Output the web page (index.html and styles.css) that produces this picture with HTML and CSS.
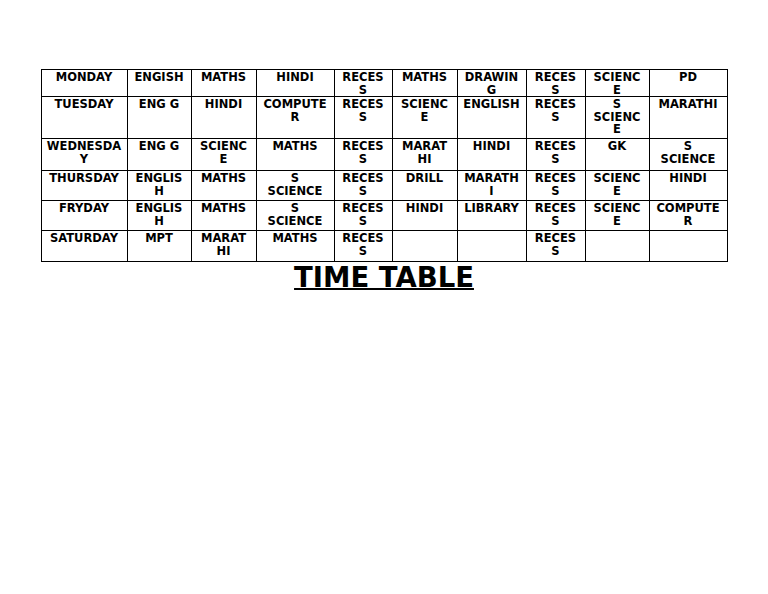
FILE: index.html
```html
<!DOCTYPE html>
<html>
<head>
<meta charset="utf-8">
<link rel="stylesheet" href="styles.css">
</head>
<body>
<div class="page">
<table class="tt">
<colgroup>
<col class="c1"><col class="c2"><col class="c3"><col class="c4"><col class="c5"><col class="c6"><col class="c7"><col class="c8"><col class="c9"><col class="c10">
</colgroup>
<tr class="r1"><td>MONDAY</td><td>ENGISH</td><td>MATHS</td><td>HINDI</td><td>RECESS</td><td>MATHS</td><td>DRAWING</td><td>RECESS</td><td>SCIENCE</td><td>PD</td></tr>
<tr class="r2"><td>TUESDAY</td><td>ENG G</td><td>HINDI</td><td>COMPUTER</td><td>RECESS</td><td>SCIENCE</td><td>ENGLISH</td><td>RECESS</td><td>S SCIENCE</td><td>MARATHI</td></tr>
<tr class="r3"><td>WEDNESDAY</td><td>ENG G</td><td>SCIENCE</td><td>MATHS</td><td>RECESS</td><td>MARATHI</td><td>HINDI</td><td>RECESS</td><td>GK</td><td>S SCIENCE</td></tr>
<tr class="r4"><td>THURSDAY</td><td>ENGLISH</td><td>MATHS</td><td>S SCIENCE</td><td>RECESS</td><td>DRILL</td><td>MARATHI</td><td>RECESS</td><td>SCIENCE</td><td>HINDI</td></tr>
<tr class="r5"><td>FRYDAY</td><td>ENGLISH</td><td>MATHS</td><td>S SCIENCE</td><td>RECESS</td><td>HINDI</td><td>LIBRARY</td><td>RECESS</td><td>SCIENCE</td><td>COMPUTER</td></tr>
<tr class="r6"><td>SATURDAY</td><td>MPT</td><td>MARATHI</td><td>MATHS</td><td>RECESS</td><td></td><td></td><td>RECESS</td><td></td><td></td></tr>
</table>
<h1 class="title">TIME TABLE</h1>
</div>
</body>
</html>
```
FILE: styles.css
```css
html, body {
  margin: 0;
  padding: 0;
  background: #ffffff;
}
.page {
  padding-top: 69px;
  display: flex;
  flex-direction: column;
  align-items: center;
  font-family: "DejaVu Sans", sans-serif;
  color: #000;
}
.tt {
  border-collapse: collapse;
  table-layout: fixed;
  width: 687px;
}
.tt td {
  border: 1px solid #000;
  padding: 1px 5px 0 5px;
  vertical-align: top;
  text-align: center;
  font-weight: bold;
  font-size: 11.5px;
  line-height: 12.5px;
  overflow-wrap: anywhere;
}
.c1 { width: 86px; }
.c2 { width: 64px; }
.c3 { width: 65px; }
.c4 { width: 78px; }
.c5 { width: 58px; }
.c6 { width: 65px; }
.c7 { width: 69px; }
.c8 { width: 59px; }
.c9 { width: 64px; }
.c10 { width: 78px; }
.r1 td { height: 20px; }
.r2 td { height: 40px; }
.r3 td { height: 30px; }
.r4 td { height: 28px; }
.r5 td { height: 28px; }
.r6 td { height: 29px; }
.title {
  margin: 0;
  font-size: 27.5px;
  line-height: 30px;
  font-weight: bold;
  text-decoration: underline;
  text-decoration-thickness: 2px;
}
```
